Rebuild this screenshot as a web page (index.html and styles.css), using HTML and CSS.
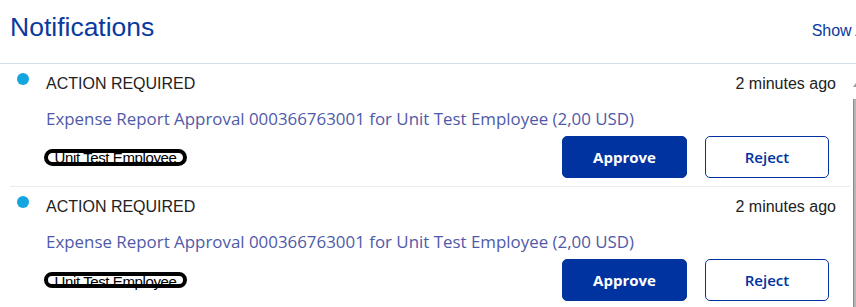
FILE: index.html
```html
<!DOCTYPE html>
<html lang="en">
<head>
<meta charset="utf-8">
<title>Notifications</title>
<link rel="stylesheet" href="styles.css">
</head>
<body>
<div class="panel">
  <header class="header">
    <h1 class="title">Notifications</h1>
    <a class="show-all" href="#">Show All</a>
  </header>
  <div class="body">
    <ul class="list">
      <li class="item">
        <div class="top">
          <span class="dot"></span>
          <span class="kind">ACTION REQUIRED</span>
          <span class="time">2 minutes ago</span>
        </div>
        <div class="desc">Expense Report Approval 000366763001 for Unit Test Employee (2,00 USD)</div>
        <div class="actions">
          <span class="redact">Unit Test Employee</span>
          <div class="buttons">
            <button class="btn btn-primary">Approve</button>
            <button class="btn btn-outline">Reject</button>
          </div>
        </div>
      </li>
      <li class="item">
        <div class="top">
          <span class="dot"></span>
          <span class="kind">ACTION REQUIRED</span>
          <span class="time">2 minutes ago</span>
        </div>
        <div class="desc">Expense Report Approval 000366763001 for Unit Test Employee (2,00 USD)</div>
        <div class="actions">
          <span class="redact redact-low">Unit Test Employee</span>
          <div class="buttons">
            <button class="btn btn-primary">Approve</button>
            <button class="btn btn-outline">Reject</button>
          </div>
        </div>
      </li>
    </ul>
    <div class="scrollbar">
      <span class="arrow"></span>
      <span class="thumb"></span>
    </div>
  </div>
</div>
</body>
</html>
```

FILE: styles.css
```css
html, body {
  margin: 0;
  padding: 0;
  background: #ffffff;
  overflow: hidden;
}

body {
  font-family: "Liberation Sans", Arial, sans-serif;
  color: #222222;
}

.panel {
  width: 900px;
}

.header {
  display: flex;
  align-items: baseline;
  justify-content: space-between;
  height: 51px;
  padding: 12px 27px 0 10px;
  border-bottom: 1px solid #d3dde9;
}

.title {
  margin: 0;
  font-size: 26.5px;
  line-height: 30px;
  font-weight: normal;
  color: #0a3a9e;
}

.show-all {
  font-size: 16px;
  color: #0a3a9e;
  text-decoration: none;
}

.body {
  display: flex;
  align-items: stretch;
  height: 243px;
}

.list {
  list-style: none;
  margin: 0 0 0 10px;
  padding: 0;
  width: 840px;
}

.item {
  padding: 10px 14px 8px 7px;
  border-bottom: 1px solid #ececec;
}

.top {
  display: flex;
  align-items: flex-start;
  height: 20px;
  line-height: 20px;
  font-size: 16px;
}

.dot {
  width: 12px;
  height: 12px;
  margin-top: -1px;
  margin-right: 17px;
  border-radius: 50%;
  background: #12a5e0;
  flex: none;
}

.kind {
  flex: 1;
  color: #222222;
}

.time {
  color: #222222;
}

.desc {
  margin-top: 14px;
  padding-left: 29px;
  font-family: "Open Sans", "Noto Sans", sans-serif;
  font-size: 16.9px;
  line-height: 22px;
  color: #4f5aa8;
  white-space: nowrap;
}

.actions {
  display: flex;
  align-items: center;
  justify-content: space-between;
  margin-top: 6px;
  padding-left: 27px;
  padding-right: 7px;
}

.redact {
  display: inline-block;
  box-sizing: border-box;
  width: 143px;
  height: 17px;
  border: 4px solid #000000;
  border-radius: 9px;
  font-family: "Liberation Sans", Arial, sans-serif;
  font-size: 15px;
  line-height: 9px;
  color: #000000;
  text-align: center;
  white-space: nowrap;
  overflow: hidden;
  letter-spacing: -0.4px;
}

.redact-low {
  line-height: 11px;
  overflow: visible;
  height: 16px;
}

.buttons {
  display: flex;
  gap: 18px;
}

.btn {
  box-sizing: border-box;
  height: 42px;
  border-radius: 5px;
  font-family: "Open Sans", "Noto Sans", sans-serif;
  font-size: 15px;
  padding: 0;
  cursor: pointer;
}

.btn-primary {
  width: 125px;
  background: #0033a0;
  border: 1px solid #0033a0;
  color: #ffffff;
  font-weight: 700;
}

.btn-outline {
  width: 124px;
  background: #ffffff;
  border: 1px solid #0033a0;
  color: #0033a0;
  font-weight: 600;
}

.scrollbar {
  display: flex;
  flex-direction: column;
  margin-left: 3px;
  width: 6px;
  padding-top: 19px;
}

.arrow {
  width: 0;
  height: 0;
  border-left: 3px solid transparent;
  border-right: 3px solid transparent;
  border-bottom: 4px solid #9a9a9a;
}

.thumb {
  flex: 1;
  margin-top: 12px;
  width: 4px;
  background: #b4b4b4;
  border-left: 1px solid #8c8c8c;
}
```
